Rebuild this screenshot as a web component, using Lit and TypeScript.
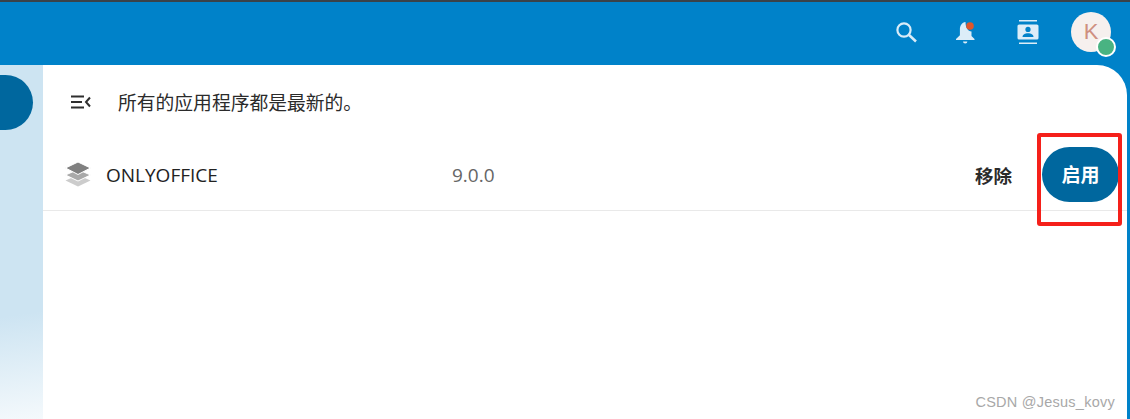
import { LitElement, html, css } from "lit";
import { customElement } from "lit/decorators.js";

@customElement("app-root")
export class AppRoot extends LitElement {
  static styles = css`
    :host {
      display: flex;
      flex-direction: column;
      width: 1130px;
      height: 419px;
      overflow: hidden;
      background: #0082c9;
      font-family: "Open Sans", "Noto Sans CJK SC", sans-serif;
      color: #222;
    }
    .top {
      height: 63px;
      border-top: 2px solid #3a4248;
      display: flex;
      align-items: center;
      justify-content: flex-end;
      box-sizing: content-box;
    }
    .tools { display: flex; align-items: center; padding-right: 19px; margin-top: -4px; }
    .tool { width: 24px; height: 24px; display: block; }
    .search { margin-right: 35px; }
    .bell { margin-right: 39px; }
    .contacts { margin-right: 31px; }
    .avatar {
      position: relative;
      width: 40px;
      height: 40px;
      border-radius: 50%;
      background: #f6f0ee;
      color: #cf8f80;
      font: 22px/40px "Liberation Sans", sans-serif;
      text-align: center;
    }
    .status {
      position: absolute;
      right: -5px;
      bottom: -5px;
      width: 16px;
      height: 16px;
      border-radius: 50%;
      background: #49b382;
      border: 2px solid #fff;
    }
    .body { flex: 1; display: flex; min-height: 0; }
    .side {
      width: 43px;
      flex: none;
      background: linear-gradient(172deg, #cde4f2 0%, #cde4f2 70%, #f4f9fc 100%);
      padding-top: 10px;
      box-sizing: border-box;
    }
    .pill {
      width: 60px;
      height: 55px;
      margin-left: -27px;
      border-radius: 28px;
      background: #00679e;
    }
    .main {
      position: relative;
      flex: none;
      width: 1084px;
      background: #fff;
      border-top-right-radius: 30px;
    }
    .head { height: 75px; display: flex; align-items: center; padding-bottom: 2px; box-sizing: border-box; }
    .menu { width: 20px; height: 16px; margin-left: 28px; flex: none; }
    .msg { margin-left: 27px; font-size: 18.8px; color: #2b2b2b; }
    .row {
      height: 71px;
      border-bottom: 1px solid #e9e9e9;
      display: flex;
      align-items: center;
      box-sizing: border-box;
    }
    .stack { width: 26px; height: 26px; margin-left: 22px; flex: none; margin-top: -2px; }
    .name { margin-left: 15px; width: 346px; font-size: 19px; color: #222; flex: none; }
    .ver { font-size: 19px; color: #666; flex: 1; }
    .remove { font-size: 18.5px; font-weight: 700; color: #2b2b2b; margin-right: 30px; }
    .enable {
      width: 77px;
      height: 55px;
      margin-right: 8px;
      margin-top: -2px;
      border: 0;
      padding: 0;
      border-radius: 28px;
      background: #00679e;
      color: #fff;
      font: 700 19px "Open Sans", "Noto Sans CJK SC", sans-serif;
    }
    .mark {
      position: absolute;
      left: 994px;
      top: 68px;
      width: 85px;
      height: 93px;
      box-sizing: border-box;
      border: 4px solid #f5201a;
      border-radius: 3px;
    }
    .wm {
      position: absolute;
      right: 12px;
      bottom: 9px;
      font: 14.5px "Liberation Sans", sans-serif;
      letter-spacing: 0.25px;
      color: #a8a8a8;
    }
  `;

  render() {
    return html`
      <div class="top">
        <div class="tools">
          <svg class="tool search" viewBox="0 0 24 24" fill="none" stroke="#d9ecf8" stroke-width="2.2">
            <circle cx="10" cy="10" r="6.6"></circle>
            <path d="M14.8 14.8 L22 21.5" stroke-width="2.6"></path>
          </svg>
          <svg class="tool bell" viewBox="0 0 24 24">
            <path fill="#dcedf8" d="M12.5 2c-3.6.6-5.6 3.4-5.6 7.5v5.7L3 19v1h18.5v-1l-3-3V11.6C15 11 12.5 8 12.5 2z"></path>
            <path fill="#dcedf8" d="M10 21.4h4.4a2.2 2 0 0 1-4.4 0z"></path>
            <circle cx="17" cy="6" r="3.8" fill="#e0562a"></circle>
          </svg>
          <svg class="tool contacts" viewBox="0 0 24 24">
            <path fill="#dcedf8" d="M3 0h18v1.6H3zM3 22.4h18v1.6H3z"></path>
            <rect x="1.5" y="4.5" width="21" height="15" rx="1.6" fill="#dcedf8"></rect>
            <circle cx="12" cy="9.4" r="2.6" fill="#0082c9"></circle>
            <path fill="#0082c9" d="M6.5 17c0-2.6 2.6-3.8 5.5-3.8s5.5 1.2 5.5 3.8z"></path>
          </svg>
          <div class="avatar">K<span class="status"></span></div>
        </div>
      </div>
      <div class="body">
        <div class="side"><div class="pill"></div></div>
        <div class="main">
          <div class="head">
            <svg class="menu" viewBox="0 0 20 16" fill="none" stroke="#2f2f2f" stroke-width="2">
              <path d="M0 2.5H13M0 8H11M0 13.5H13"></path>
              <path d="M19 3.5 L15 8 L19 12.5"></path>
            </svg>
            <span class="msg">所有的应用程序都是最新的。</span>
          </div>
          <div class="row">
            <svg class="stack" viewBox="0 0 26 26">
              <path fill="#cccccc" d="M13 14 L25.5 19.5 L13 25.5 L0.5 19.5z"></path>
              <path fill="#a9a9a9" d="M13 8.5 L25.5 14 L13 20 L0.5 14z" stroke="#fff" stroke-width="1"></path>
              <path fill="#808080" d="M13 1 L25.5 7 L13 13.5 L0.5 7z" stroke="#fff" stroke-width="1"></path>
            </svg>
            <span class="name">ONLYOFFICE</span>
            <span class="ver">9.0.0</span>
            <span class="remove">移除</span>
            <button class="enable">启用</button>
          </div>
          <div class="mark"></div>
          <div class="wm">CSDN @Jesus_kovy</div>
        </div>
      </div>
    `;
  }
}
